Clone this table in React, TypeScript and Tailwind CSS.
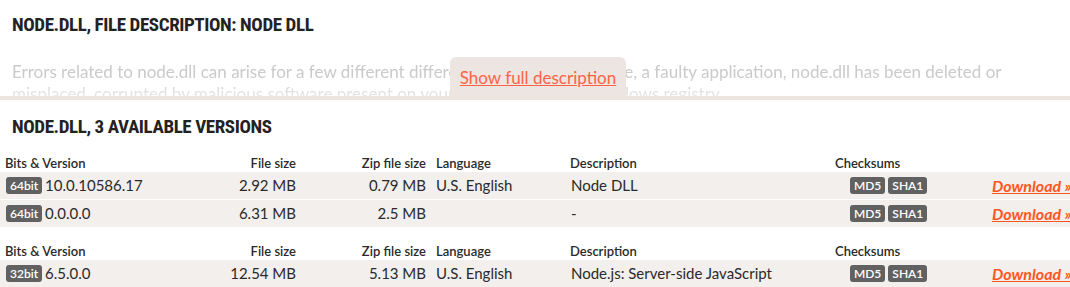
const SANS = "font-['Source_Sans_Pro','Lato','Noto_Sans',sans-serif]";
const HEAD = "font-['Roboto_Condensed','Roboto',sans-serif]";

type Row = {
  bits: string;
  version: string;
  size: string;
  zip: string;
  lang: string;
  desc: string;
};

const GROUPS: Row[][] = [
  [
    { bits: "64bit", version: "10.0.10586.17", size: "2.92 MB", zip: "0.79 MB", lang: "U.S. English", desc: "Node DLL" },
    { bits: "64bit", version: "0.0.0.0", size: "6.31 MB", zip: "2.5 MB", lang: "", desc: "-" },
  ],
  [
    { bits: "32bit", version: "6.5.0.0", size: "12.54 MB", zip: "5.13 MB", lang: "U.S. English", desc: "Node.js: Server-side JavaScript" },
  ],
];

const COLS = "grid grid-cols-[201px_95px_130px_144px_265px_157px_110px] items-center";

function Badge({ children }: { children: string }) {
  return (
    <span className="rounded-[3px] bg-[#616161] px-[4px] py-[1px] text-[12px] font-semibold leading-[15px] text-white">
      {children}
    </span>
  );
}

function Header() {
  return (
    <div className={`${COLS} h-[20px] pt-[2px] text-[13px] font-semibold text-[#2a2a2a]`}>
      <div className="pl-[5px]">Bits &amp; Version</div>
      <div className="text-right">File size</div>
      <div className="text-right">Zip file size</div>
      <div className="pl-[10px]">Language</div>
      <div>Description</div>
      <div>Checksums</div>
      <div />
    </div>
  );
}

function VersionRow({ r }: { r: Row }) {
  return (
    <div className={`${COLS} h-[27px] bg-[#f2efec] text-[15px] text-[#2a2a2a]`}>
      <div className="flex items-center gap-[3px] pl-[6px]">
        <Badge>{r.bits}</Badge>
        <span>{r.version}</span>
      </div>
      <div className="text-right">{r.size}</div>
      <div className="text-right">{r.zip}</div>
      <div className="pl-[10px]">{r.lang}</div>
      <div className="pl-[1px]">{r.desc}</div>
      <div className="flex gap-[3px] pl-[15px]">
        <Badge>MD5</Badge>
        <Badge>SHA1</Badge>
      </div>
      <div>
        <a className="whitespace-nowrap text-[16px] font-bold italic text-[#ff5722] underline">
          Download »
        </a>
      </div>
    </div>
  );
}

export default function App() {
  return (
    <div className={`${SANS} h-[287px] w-[1070px] overflow-hidden bg-white`}>
      <div className="relative">
        <h2 className={`${HEAD} px-[12px] pt-[14px] text-[19px] font-bold leading-[22px] tracking-[-0.4px] text-[#222]`}>
          NODE.DLL, FILE DESCRIPTION: NODE DLL
        </h2>
        <p className="mt-[25px] h-[35px] overflow-hidden px-[12px] text-[17px] leading-[22px] text-[#c4c4c4] [mask-image:linear-gradient(to_bottom,rgba(0,0,0,0.9),rgba(0,0,0,0.9)_40%,rgba(0,0,0,0.4))]">
          Errors related to node.dll can arise for a few different different reasons. For instance, a faulty application,
          node.dll has been deleted or misplaced, corrupted by malicious software present on your PC or a damaged Windows
          registry.
        </p>
        <div className="absolute left-[450px] top-[57px] flex h-[40px] w-[176px] items-start justify-center rounded-t-[6px] bg-[#ede5e1] pt-[10px]">
          <span className="text-[17px] leading-[22px] text-[#ff6347] underline">Show full description</span>
        </div>
        <div className="h-[4px] bg-[#eee5e1]" />
      </div>

      <h2 className={`${HEAD} px-[12px] pt-[16px] text-[19px] font-bold leading-[22px] tracking-[-0.4px] text-[#222]`}>
        NODE.DLL, 3 AVAILABLE VERSIONS
      </h2>

      <div className="w-[1105px] pt-[14px]">
        {GROUPS.map((g, i) => (
          <div key={i} className={i > 0 ? "pt-[13px]" : ""}>
            <Header />
            {g.map((r, j) => (
              <div key={j} className={j > 0 ? "mt-px" : ""}>
                <VersionRow r={r} />
              </div>
            ))}
          </div>
        ))}
      </div>
    </div>
  );
}
